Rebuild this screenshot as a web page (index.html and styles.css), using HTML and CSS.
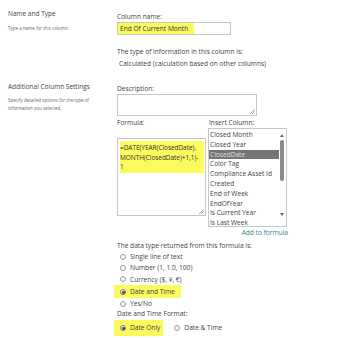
FILE: index.html
```html
<!DOCTYPE html>
<html>
<head>
<meta charset="utf-8">
<link rel="stylesheet" href="styles.css">
</head>
<body>
<div class="page">
  <div class="section s1">
    <div class="side">
      <div class="title">Name and Type</div>
      <div class="desc">Type a name for this column.</div>
    </div>
    <div class="main">
      <div class="label">Column name:</div>
      <div class="input"><span class="hl">End Of Current Month</span></div>
      <div class="label typeinfo">The type of information in this column is:</div>
      <div class="label calc">Calculated (calculation based on other columns)</div>
    </div>
  </div>
  <div class="section s2">
    <div class="side">
      <div class="title">Additional Column Settings</div>
      <div class="desc">Specify detailed options for the type of information you selected.</div>
    </div>
    <div class="main">
      <div class="label">Description:</div>
      <div class="textarea desc-box"><span class="grip"></span></div>
      <div class="formula-row">
        <div class="formula-col">
          <div class="label">Formula:</div>
          <div class="textarea formula-box">
            <div class="ftext">=DATE(YEAR(ClosedDate),<br>MONTH(ClosedDate)+1,1)-<br>1</div>
            <span class="grip"></span>
          </div>
        </div>
        <div class="insert-col">
          <div class="label">Insert Column:</div>
          <div class="listbox">
            <div class="items">
              <div class="item">Closed Month</div>
              <div class="item">Closed Year</div>
              <div class="item sel">ClosedDate</div>
              <div class="item">Color Tag</div>
              <div class="item">Compliance Asset Id</div>
              <div class="item">Created</div>
              <div class="item">End of Week</div>
              <div class="item">EndOfYear</div>
              <div class="item">Is Current Year</div>
              <div class="item">Is Last Week</div>
            </div>
            <div class="scroll">
              <span class="arrow up"></span>
              <span class="thumb"></span>
              <span class="arrow down"></span>
            </div>
          </div>
          <div class="add">Add to formula</div>
        </div>
      </div>
      <div class="label returned">The data type returned from this formula is:</div>
      <div class="radios">
        <div class="radio"><span class="dot"></span>Single line of text</div>
        <div class="radio"><span class="dot"></span>Number (1, 1.0, 100)</div>
        <div class="radio"><span class="dot"></span>Currency ($, ¥, €)</div>
        <div class="radio hlr r-dt"><span class="dot on"></span>Date and Time</div>
        <div class="radio"><span class="dot"></span>Yes/No</div>
      </div>
      <div class="label fmt">Date and Time Format:</div>
      <div class="fmt-row">
        <div class="radio hlr r-do"><span class="dot on"></span>Date Only</div>
        <div class="radio"><span class="dot"></span>Date &amp; Time</div>
      </div>
    </div>
  </div>
</div>
</body>
</html>
```
FILE: styles.css
```css
html, body {
  margin: 0;
  padding: 0;
  background: #fff;
}
body {
  font-family: "Open Sans", "Noto Sans", sans-serif;
  color: #333;
  width: 363px;
  height: 338px;
  overflow: hidden;
}
.page {
  padding: 0 0 0 8px;
}
.section {
  display: flex;
}
.side {
  width: 109px;
  flex: none;
}
.main {
  flex: 1;
  white-space: nowrap;
}
.title {
  font-size: 6.5px;
  color: #444;
  line-height: 10px;
}
.desc {
  font-size: 4.5px;
  color: #666;
  line-height: 8px;
  margin-top: 5px;
  width: 104px;
}
.s1 .side { padding-top: 9px; }
.s1 .main { padding-top: 12px; }
.label {
  font-size: 6.6px;
  line-height: 10px;
  color: #444;
}
.input {
  width: 112px;
  height: 11px;
  border: 1px solid #c6c6c6;
  font-size: 6.6px;
  line-height: 11px;
}
.hl {
  display: inline-block;
  background: #fbfb5d;
  padding: 0 2px;
  width: 72px;
  color: #333;
}
.typeinfo { margin-top: 12px; }
.calc { margin-top: 2px; padding-left: 2px; }

.s2 { margin-top: 12px; }
.s2 .side { padding-top: 1px; }
.s2 .desc { margin-top: 4px; }
.s2 .main { padding-top: 3px; }
.textarea {
  border: 1px solid #c6c6c6;
  position: relative;
  box-sizing: border-box;
}
.desc-box {
  width: 140px;
  height: 22px;
}
.grip {
  position: absolute;
  right: 1px;
  bottom: 1px;
  width: 5px;
  height: 5px;
  background: linear-gradient(135deg, transparent 45%, #aaa 45%, #aaa 55%, transparent 55%, transparent 70%, #aaa 70%, #aaa 80%, transparent 80%);
}
.formula-row {
  display: flex;
  margin-top: 2px;
}
.formula-col {
  width: 91px;
}
.formula-box {
  width: 89px;
  height: 78px;
  margin-top: 10px;
  padding: 2px 1px 0 2px;
}
.ftext {
  background: #fbfb5d;
  font-size: 6.5px;
  line-height: 9.5px;
  color: #333;
  width: 84px;
  padding-top: 2px;
  padding-bottom: 1px;
  letter-spacing: -0.05px;
}
.insert-col {
  width: 80px;
}
.insert-col .label {
  padding-left: 1px;
}
.listbox {
  display: flex;
  width: 79px;
  height: 99px;
  box-sizing: border-box;
  border: 1px solid #c6c6c6;
  padding: 1px 1px 0 0;
  overflow: hidden;
}
.items {
  width: 70px;
  font-size: 6.6px;
  line-height: 9.8px;
  color: #444;
}
.item {
  padding-left: 1px;
}
.item.sel {
  background: #757575;
  color: #ddd;
}
.scroll {
  flex: 1;
  display: flex;
  flex-direction: column;
  align-items: center;
  padding-top: 4px;
}
.arrow {
  width: 0;
  height: 0;
  border-left: 2.5px solid transparent;
  border-right: 2.5px solid transparent;
}
.arrow.up { border-bottom: 3px solid #666; }
.arrow.down { border-top: 3px solid #666; margin-top: 32px; }
.thumb {
  width: 4px;
  height: 41px;
  margin-top: 3px;
  background: #8a8a8a;
  border-radius: 2px;
}
.add {
  color: #2a8a8a;
  font-size: 6.6px;
  line-height: 10px;
  text-align: right;
  margin-top: 1px;
}
.returned { margin-top: 3px; }
.radios {
  display: flex;
  flex-direction: column;
}
.radio {
  display: flex;
  align-items: center;
  font-size: 6.6px;
  line-height: 11.3px;
  color: #444;
  padding-left: 3px;
  width: fit-content;
}
.dot {
  flex: none;
  width: 6px;
  height: 6px;
  border: 0.8px solid #999;
  border-radius: 50%;
  box-sizing: border-box;
  margin-right: 4px;
  position: relative;
  background: #fff;
}
.dot.on {
  border-color: #777;
}
.dot.on::after {
  content: "";
  position: absolute;
  left: 1.2px;
  top: 1.2px;
  width: 2.8px;
  height: 2.8px;
  border-radius: 50%;
  background: #444;
}
.hlr {
  background: #fbfb5d;
}
.r-dt {
  padding: 1px 6px 1px 6px;
  margin-left: -3px;
}
.fmt { margin-top: 0; }
.fmt-row {
  display: flex;
  align-items: center;
  margin-top: 1px;
}
.r-do { padding: 2px 3px 2px 6px; margin-left: -3px; margin-right: 8px; }
```
